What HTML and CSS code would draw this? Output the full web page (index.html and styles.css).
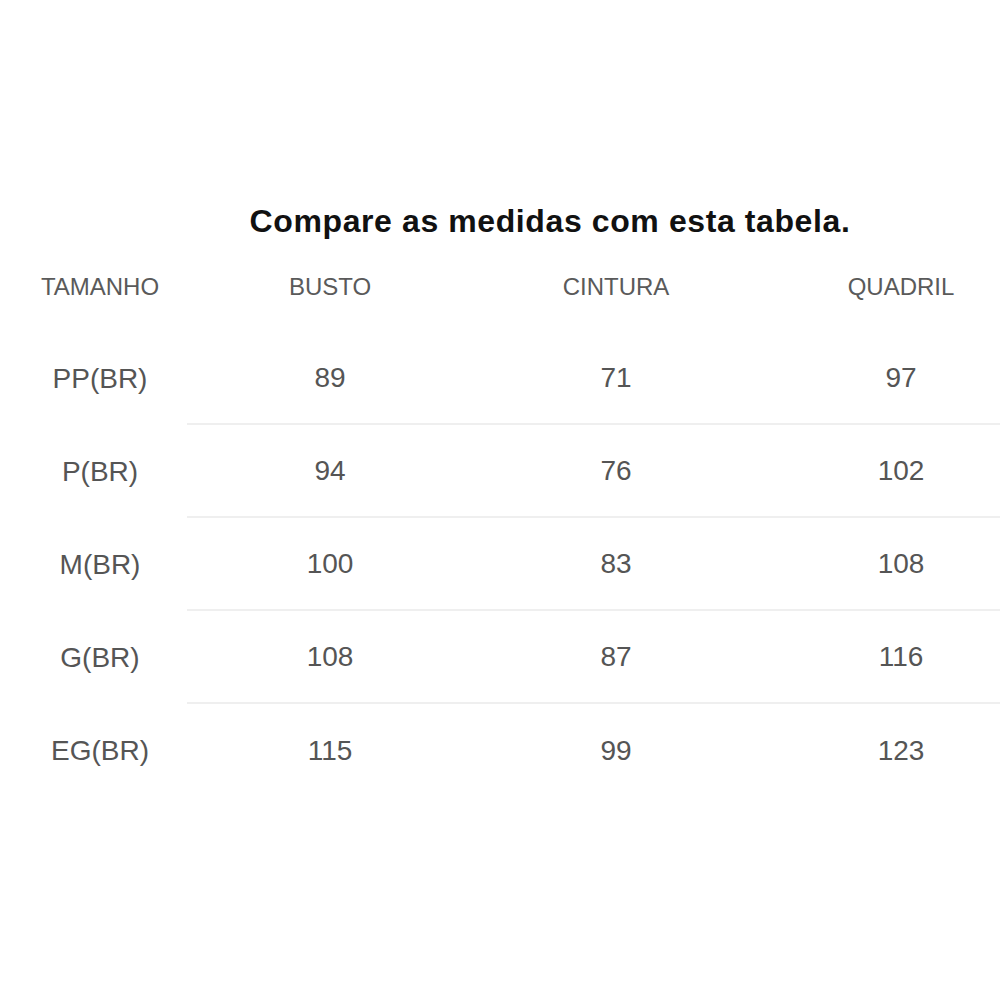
FILE: index.html
```html
<!DOCTYPE html>
<html lang="pt-BR">
<head>
<meta charset="utf-8">
<title>Tabela de medidas</title>
<link rel="stylesheet" href="styles.css">
</head>
<body>
<div class="page">
  <h1 class="title">Compare as medidas com esta tabela.</h1>
  <div class="table">
    <div class="head first">TAMANHO</div>
    <div class="head">BUSTO</div>
    <div class="head">CINTURA</div>
    <div class="head last">QUADRIL</div>

    <div class="cell first">PP(BR)</div>
    <div class="cell line">89</div>
    <div class="cell line">71</div>
    <div class="cell line last">97</div>

    <div class="cell first">P(BR)</div>
    <div class="cell line">94</div>
    <div class="cell line">76</div>
    <div class="cell line last">102</div>

    <div class="cell first">M(BR)</div>
    <div class="cell line">100</div>
    <div class="cell line">83</div>
    <div class="cell line last">108</div>

    <div class="cell first">G(BR)</div>
    <div class="cell line">108</div>
    <div class="cell line">87</div>
    <div class="cell line last">116</div>

    <div class="cell first">EG(BR)</div>
    <div class="cell">115</div>
    <div class="cell">99</div>
    <div class="cell last">123</div>
  </div>
</div>
</body>
</html>
```
FILE: styles.css
```css
html, body {
  margin: 0;
  padding: 0;
  background: #fff;
}
body {
  font-family: "Liberation Sans", Arial, sans-serif;
}
.page {
  width: 1000px;
  padding-top: 200px;
}
.title {
  margin: 0;
  padding-left: 100px;
  font-size: 32px;
  font-weight: bold;
  letter-spacing: 0.6px;
  line-height: 42px;
  height: 42px;
  text-align: center;
  color: #111;
}
.table {
  margin-top: 22px;
  display: grid;
  grid-template-columns: 187px 286px 286px 241px;
  grid-auto-rows: 93px;
  grid-template-rows: 68px;
}
.head {
  font-size: 24px;
  color: #5a5a5a;
  text-align: center;
  line-height: 46px;
}
.cell {
  font-size: 28px;
  color: #555;
  text-align: center;
  display: flex;
  align-items: center;
  justify-content: center;
  box-sizing: border-box;
}
.first {
  padding-left: 13px;
}
.last {
  padding-left: 43px;
}
.line {
  border-bottom: 2px solid #efefef;
}
```
